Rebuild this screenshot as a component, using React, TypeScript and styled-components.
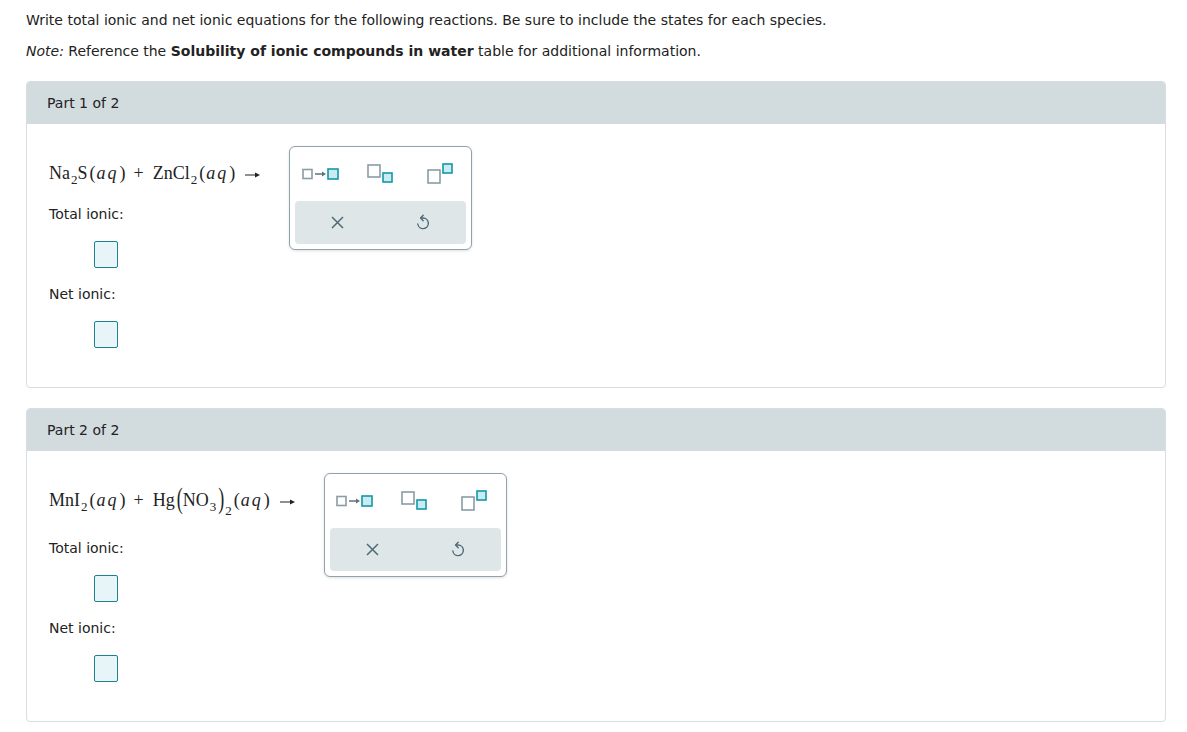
import styled, { createGlobalStyle } from "styled-components";

const GlobalStyle = createGlobalStyle`
  body {
    margin: 0;
    background: #ffffff;
    font-family: "DejaVu Sans", Verdana, sans-serif;
    color: #222;
  }
`;

const Page = styled.div`
  padding: 12px 21px 12px 26px;
`;

const Intro = styled.p`
  margin: 0 0 14px;
  font-size: 14px;
  line-height: 17px;

  &:last-of-type {
    margin-bottom: 21px;
  }
`;

const Card = styled.section`
  border: 1px solid #d6dee1;
  border-radius: 4px;
  margin-bottom: 20px;
  overflow: hidden;
`;

const CardHeader = styled.div`
  background: #d2dbde;
  height: 42px;
  display: flex;
  align-items: center;
  padding-left: 20px;
  font-size: 14px;
`;

const CardBody = styled.div`
  display: flex;
  align-items: flex-start;
  padding: 22px 22px 0 22px;
`;

const Work = styled.div`
  display: flex;
  flex-direction: column;
`;

const Equation = styled.div<{ $tall?: boolean }>`
  font-family: "Liberation Serif", "Times New Roman", serif;
  font-size: 18px;
  height: 28px;
  line-height: 28px;
  margin-top: 13px;
  padding-bottom: ${({ $tall }) => ($tall ? 7 : 0)}px;
  white-space: nowrap;
`;

const Sub = styled.span<{ $drop?: number }>`
  font-size: 13px;
  position: relative;
  top: ${({ $drop }) => $drop ?? 5}px;
  margin-left: 1px;
`;

const Paren = styled.span<{ $big?: boolean }>`
  display: inline-block;
  margin-left: 2px;
  transform: ${({ $big }) => ($big ? "scaleY(1.6)" : "none")};
  transform-origin: 50% 58%;
`;

const State = styled.i`
  font-style: italic;
  letter-spacing: 2px;
  margin: 0 -1px 0 1px;
`;

const Plus = styled.span`
  margin: 0 9px 0 8px;
`;

const Arrow = styled.span`
  margin-left: 10px;
  display: inline-block;
  vertical-align: middle;
  line-height: 0;
`;

const Label = styled.div<{ $gap: number }>`
  font-size: 14px;
  margin-top: ${({ $gap }) => $gap}px;
  height: 16px;
  line-height: 16px;
`;

const AnswerBox = styled.div`
  width: 22px;
  height: 25px;
  margin: 19px 0 0 45px;
  border: 1px solid #1f8090;
  border-radius: 2px;
  background: #e7f5f8;
`;

const Spacer = styled.div`
  height: 39px;
`;

const Toolbox = styled.div<{ $offset: number }>`
  margin-left: ${({ $offset }) => $offset}px;
  width: 181px;
  height: 102px;
  border: 1px solid #8fa3ab;
  border-radius: 6px;
  box-shadow: 0 1px 3px rgba(0, 0, 0, 0.12);
  background: #fff;
  display: flex;
  flex-direction: column;
`;

const ToolRow = styled.div`
  display: grid;
  grid-template-columns: repeat(3, 1fr);
  height: 54px;
  align-items: center;
  justify-items: center;
`;

const ActionRow = styled.div`
  display: grid;
  grid-template-columns: repeat(2, 1fr);
  margin: 0 5px;
  height: 43px;
  background: #dfe6e8;
  border-radius: 4px;
  align-items: center;
  justify-items: center;
`;

const ToolButton = styled.span`
  display: inline-flex;
`;

const gray = "#8a9ca4";
const teal = "#1597aa";
const tealFill = "#c9ecf1";

function ArrowIcon() {
  return (
    <svg width="37" height="12" viewBox="0 0 37 12">
      <rect x="1" y="1.5" width="9" height="9" fill="#fff" stroke={gray} strokeWidth="1.6" />
      <line x1="13" y1="6" x2="22" y2="6" stroke="#5c737c" strokeWidth="1.4" />
      <path d="M20 3.5 L24 6 L20 8.5 Z" fill="#5c737c" />
      <rect x="26" y="1" width="10" height="10" fill={tealFill} stroke={teal} strokeWidth="1.6" />
    </svg>
  );
}

function SubIcon() {
  return (
    <svg width="28" height="20" viewBox="0 0 28 20">
      <rect x="1" y="1" width="12" height="12" fill="#fff" stroke={gray} strokeWidth="1.6" />
      <rect x="16" y="9" width="9" height="9" fill={tealFill} stroke={teal} strokeWidth="1.6" />
    </svg>
  );
}

function SupIcon() {
  return (
    <svg width="28" height="22" viewBox="0 0 28 22">
      <rect x="1" y="7" width="12" height="13" fill="#fff" stroke={gray} strokeWidth="1.6" />
      <rect x="16" y="1" width="9" height="9" fill={tealFill} stroke={teal} strokeWidth="1.6" />
    </svg>
  );
}

function CloseIcon() {
  return (
    <svg width="13" height="13" viewBox="0 0 13 13">
      <path d="M1 1 L12 12 M12 1 L1 12" stroke="#4e6a75" strokeWidth="1.5" />
    </svg>
  );
}

function UndoIcon() {
  return (
    <svg width="16" height="17" viewBox="0 0 16 17">
      <path
        d="M6 4 H8 A5.3 5.3 0 1 1 2.8 10"
        fill="none"
        stroke="#4e6a75"
        strokeWidth="1.4"
        strokeLinecap="round"
      />
      <path
        d="M8.2 1.3 L5.6 4 L8.2 6.7"
        fill="none"
        stroke="#4e6a75"
        strokeWidth="1.4"
        strokeLinecap="round"
        strokeLinejoin="round"
      />
    </svg>
  );
}

function ReactionArrow() {
  return (
    <svg width="16" height="8" viewBox="0 0 16 8">
      <line x1="0" y1="4" x2="12" y2="4" stroke="#222" strokeWidth="1.1" />
      <path d="M10 1.5 L15 4 L10 6.5 Z" fill="#222" />
    </svg>
  );
}

function Toolkit({ offset }: { offset: number }) {
  return (
    <Toolbox $offset={offset}>
      <ToolRow>
        <ToolButton>
          <ArrowIcon />
        </ToolButton>
        <ToolButton>
          <SubIcon />
        </ToolButton>
        <ToolButton>
          <SupIcon />
        </ToolButton>
      </ToolRow>
      <ActionRow>
        <ToolButton>
          <CloseIcon />
        </ToolButton>
        <ToolButton>
          <UndoIcon />
        </ToolButton>
      </ActionRow>
    </Toolbox>
  );
}

const Aq = () => (
  <>
    <Paren>(</Paren>
    <State>aq</State>
    <Paren>)</Paren>
  </>
);

function Part({
  title,
  equation,
  offset,
  tall,
}: {
  title: string;
  equation: React.ReactNode;
  offset: number;
  tall?: boolean;
}) {
  return (
    <Card>
      <CardHeader>{title}</CardHeader>
      <CardBody>
        <Work>
          <Equation $tall={tall}>
            {equation}
            <Arrow>
              <ReactionArrow />
            </Arrow>
          </Equation>
          <Label $gap={19}>Total ionic:</Label>
          <AnswerBox />
          <Label $gap={18}>Net ionic:</Label>
          <AnswerBox />
          <Spacer />
        </Work>
        <Toolkit offset={offset} />
      </CardBody>
    </Card>
  );
}

export default function App() {
  return (
    <Page>
      <GlobalStyle />
      <Intro>
        Write total ionic and net ionic equations for the following reactions. Be sure to
        include the states for each species.
      </Intro>
      <Intro>
        <i>Note:</i> Reference the <b>Solubility of ionic compounds in water</b> table for
        additional information.
      </Intro>
      <Part
        title="Part 1 of 2"
        offset={28}
        equation={
          <>
            Na<Sub>2</Sub>S<Aq />
            <Plus>+</Plus>
            ZnCl<Sub>2</Sub>
            <Aq />
          </>
        }
      />
      <Part
        title="Part 2 of 2"
        offset={28}
        tall
        equation={
          <>
            MnI<Sub>2</Sub>
            <Aq />
            <Plus>+</Plus>
            Hg<Paren $big>(</Paren>NO<Sub>3</Sub>
            <Paren $big>)</Paren>
            <Sub $drop={9}>2</Sub>
            <Aq />
          </>
        }
      />
    </Page>
  );
}
